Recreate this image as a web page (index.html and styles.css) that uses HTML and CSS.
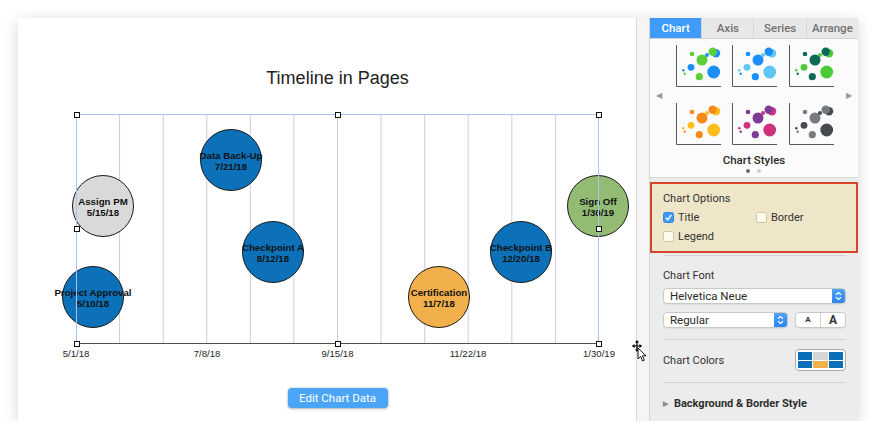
FILE: index.html
```html
<!DOCTYPE html>
<html lang="en">

<head>
    <meta charset="UTF-8">
    <meta name="viewport" content="width=device-width, initial-scale=1.0">
    <title>Timeline in Pages</title>
    <link rel="stylesheet" href="styles.css">
</head>

<body>
    <svg width="0" height="0" class="defs">
        <defs>
            <!-- bubble thumbnail used by every chart style -->
            <symbol id="thumb" viewBox="0 0 45 42">
                <path d="M0.5 0V41.5H45" class="thumb_axis" />
                <circle cx="16" cy="9" r="2.3" class="dot_a" />
                <circle cx="26" cy="15" r="5.5" class="dot_a" />
                <circle cx="31" cy="10" r="2" class="dot_b" />
                <circle cx="40" cy="8.3" r="4.2" class="dot_b" />
                <circle cx="36.7" cy="6.7" r="4.2" class="dot_a" />
                <circle cx="15" cy="22.3" r="3.4" class="dot_b" />
                <circle cx="7.3" cy="25.3" r="1.3" class="dot_b" />
                <circle cx="8.7" cy="28.7" r="1.2" class="dot_a" />
                <circle cx="23.3" cy="31.7" r="3.6" class="dot_a" />
                <circle cx="37.7" cy="27" r="6.4" class="dot_b" />
            </symbol>
        </defs>
    </svg>

    <div class="window">
        <main class="canvas">
            <h1 class="chart_title">Timeline in Pages</h1>
            <svg class="plot" width="618" height="276" viewBox="18 89 618 276">
                <!-- grid -->
                <g class="grid">
                    <line x1="119.6" y1="114" x2="119.6" y2="343" />
                    <line x1="163.2" y1="114" x2="163.2" y2="343" />
                    <line x1="206.8" y1="114" x2="206.8" y2="343" />
                    <line x1="250.3" y1="114" x2="250.3" y2="343" />
                    <line x1="293.9" y1="114" x2="293.9" y2="343" />
                    <line x1="337.5" y1="114" x2="337.5" y2="343" />
                    <line x1="381.1" y1="114" x2="381.1" y2="343" />
                    <line x1="424.7" y1="114" x2="424.7" y2="343" />
                    <line x1="468.2" y1="114" x2="468.2" y2="343" />
                    <line x1="511.8" y1="114" x2="511.8" y2="343" />
                    <line x1="555.4" y1="114" x2="555.4" y2="343" />
                </g>
                <!-- bubbles -->
                <g class="bubble">
                    <circle cx="93" cy="297" r="30.5" class="c_blue" />
                    <text x="93" y="295.5">Project Approval</text>
                    <text x="93" y="306.5">5/10/18</text>
                </g>
                <g class="bubble">
                    <circle cx="103" cy="206" r="30.5" class="c_gray" />
                    <text x="103" y="204.5">Assign PM</text>
                    <text x="103" y="215.5">5/15/18</text>
                </g>
                <g class="bubble">
                    <circle cx="231" cy="160" r="30.5" class="c_blue" />
                    <text x="231" y="158.5">Data Back-Up</text>
                    <text x="231" y="169.5">7/21/18</text>
                </g>
                <g class="bubble">
                    <circle cx="273" cy="252" r="30.5" class="c_blue" />
                    <text x="273" y="250.5">Checkpoint A</text>
                    <text x="273" y="261.5">8/12/18</text>
                </g>
                <g class="bubble">
                    <circle cx="439" cy="297" r="30.5" class="c_orange" />
                    <text x="439" y="295.5">Certification</text>
                    <text x="439" y="306.5">11/7/18</text>
                </g>
                <g class="bubble">
                    <circle cx="521" cy="252" r="30.5" class="c_blue" />
                    <text x="521" y="250.5">Checkpoint B</text>
                    <text x="521" y="261.5">12/20/18</text>
                </g>
                <g class="bubble">
                    <circle cx="598" cy="206" r="30.5" class="c_green" />
                    <text x="598" y="204.5">Sign Off</text>
                    <text x="598" y="215.5">1/30/19</text>
                </g>
                <!-- selection frame + axis -->
                <path d="M76.5 343V114.5H598.5V343" class="frame" />
                <line x1="76" y1="343.5" x2="599" y2="343.5" class="axis" />
                <g class="handle">
                    <rect x="74" y="112" width="5" height="5" />
                    <rect x="335" y="112" width="5" height="5" />
                    <rect x="596" y="112" width="5" height="5" />
                    <rect x="74" y="226" width="5" height="5" />
                    <rect x="596" y="226" width="5" height="5" />
                    <rect x="74" y="341" width="5" height="5" />
                    <rect x="335" y="341" width="5" height="5" />
                    <rect x="596" y="341" width="5" height="5" />
                </g>
                <g class="axis_label">
                    <text x="76" y="357">5/1/18</text>
                    <text x="207" y="357">7/8/18</text>
                    <text x="337.5" y="357">9/15/18</text>
                    <text x="468" y="357">11/22/18</text>
                    <text x="599" y="357">1/30/19</text>
                </g>
            </svg>
            <div class="actions">
                <button class="edit_btn">Edit Chart Data</button>
            </div>
        </main>

        <div class="gutter"></div>

        <aside class="inspector">
            <div class="tabs">
                <span class="tab active">Chart</span>
                <span class="tab">Axis</span>
                <span class="tab">Series</span>
                <span class="tab">Arrange</span>
            </div>

            <section class="styles">
                <div class="carousel">
                    <span class="arrow">&#9664;</span>
                    <div class="thumbs">
                        <svg class="thumb s_green"><use href="#thumb" /></svg>
                        <svg class="thumb s_blue"><use href="#thumb" /></svg>
                        <svg class="thumb s_teal"><use href="#thumb" /></svg>
                        <svg class="thumb s_orange"><use href="#thumb" /></svg>
                        <svg class="thumb s_purple"><use href="#thumb" /></svg>
                        <svg class="thumb s_gray"><use href="#thumb" /></svg>
                    </div>
                    <span class="arrow">&#9654;</span>
                </div>
                <div class="styles_label">Chart Styles</div>
                <div class="pager"><i class="on"></i><i></i></div>
            </section>

            <section class="options">
                <div class="label">Chart Options</div>
                <div class="check_grid">
                    <label class="check"><span class="box checked"><svg width="9" height="9" viewBox="0 0 9 9"><path d="M1.8 4.8L3.7 6.8L7.3 1.8" /></svg></span>Title</label>
                    <label class="check"><span class="box"></span>Border</label>
                    <label class="check"><span class="box"></span>Legend</label>
                </div>
            </section>

            <div class="panel">
                <div class="divider first"></div>
                <div class="label font_label">Chart Font</div>
                <div class="popup wide">
                    <span>Helvetica Neue</span>
                    <span class="stepper"><svg width="7" height="10" viewBox="0 0 7 10"><path d="M1 3.8L3.5 1.5L6 3.8M1 6.2L3.5 8.5L6 6.2" /></svg></span>
                </div>
                <div class="font_row">
                    <div class="popup narrow">
                        <span>Regular</span>
                        <span class="stepper"><svg width="7" height="10" viewBox="0 0 7 10"><path d="M1 3.8L3.5 1.5L6 3.8M1 6.2L3.5 8.5L6 6.2" /></svg></span>
                    </div>
                    <div class="segmented">
                        <span class="small_a">A</span>
                        <span class="big_a">A</span>
                    </div>
                </div>
                <div class="divider"></div>
                <div class="colors_row">
                    <span class="label">Chart Colors</span>
                    <div class="swatch">
                        <i class="sw_blue"></i><i class="sw_gray"></i><i class="sw_blue"></i>
                        <i class="sw_blue"></i><i class="sw_orange"></i><i class="sw_blue"></i>
                    </div>
                </div>
                <div class="divider"></div>
                <div class="disclosure"><span class="tri">&#9654;</span>Background &amp; Border Style</div>
            </div>
        </aside>

        <!-- move cursor -->
        <svg class="cursor" width="18" height="24" viewBox="0 0 18 24">
            <path d="M5 1V11M0.5 6H9.5" stroke="#000" stroke-width="1.2" />
            <path d="M5 0L3 2.5H7Z M5 12L3 9.5H7Z M0 6L2.5 4V8Z M10 6L7.5 4V8Z" fill="#000" />
            <path d="M6 8V19L8.6 16.4L10.6 21L12.4 20.2L10.4 15.8H14Z" fill="#fff" stroke="#000" stroke-width="0.9" />
        </svg>
    </div>
</body>

</html>
```

FILE: styles.css
```css
html,body,h1 {
    margin: 0;
    padding: 0;
}
body {
    background-color: #ffffff;
    font-family: 'Roboto', 'Liberation Sans', sans-serif;
}
.defs {
    position: absolute;
}
.window {
    position: relative;
    display: flex;
    margin: 18px 0 0 18px;
    width: 840px;
    height: 403px;
    background-color: #ffffff;
    box-shadow: 0 3px 14px rgba(0, 0, 0, 0.16);
}

/* canvas */
.canvas {
    width: 618px;
    padding-top: 49px;
    border-right: 1px solid #dadada;
    font-family: 'Liberation Sans', Arial, sans-serif;
}
.chart_title {
    padding: 0 37px 0 58px;
    text-align: center;
    font: normal 400 18px/22px 'Liberation Sans', Arial, sans-serif;
    color: #222222;
}
.plot {
    display: block;
}
.grid line {
    stroke: #cdcdd6;
    stroke-width: 1;
}
.bubble circle {
    stroke: #1a1a1a;
    stroke-width: 1;
}
.bubble text {
    text-anchor: middle;
    font-size: 9.7px;
    font-weight: bold;
    fill: #111111;
}
.c_blue { fill: #0c71b9; }
.c_gray { fill: #d9d9d9; }
.c_orange { fill: #f2b04c; }
.c_green { fill: #93bb73; }
.frame {
    fill: none;
    stroke: #a9c3f3;
    stroke-width: 1;
}
.axis {
    stroke: #4e5058;
    stroke-width: 1;
}
.handle rect {
    fill: #ffffff;
    stroke: #111111;
    stroke-width: 1;
    transform: translate(0.5px, 0.5px);
}
.axis_label text {
    text-anchor: middle;
    font-size: 9.6px;
    fill: #262626;
}
.actions {
    padding: 0 37px 0 58px;
    margin-top: 23px;
    text-align: center;
}
.edit_btn {
    width: 100px;
    height: 20px;
    border: none;
    border-radius: 4px;
    background-color: #4ba5f6;
    color: #ffffff;
    font: normal 400 11.5px 'Roboto', 'Liberation Sans', sans-serif;
    box-shadow: 0 0 0 1px rgba(0, 0, 0, 0.06), 0 1px 3px rgba(0, 0, 0, 0.25);
}

.gutter {
    width: 12px;
    background-color: #f5f5f5;
    border-right: 1px solid #d6d6d6;
}

/* inspector */
.inspector {
    width: 209px;
    background-color: #ececec;
    color: #333333;
    font-size: 11px;
}
.tabs {
    display: flex;
    height: 21px;
    background-color: #e8e8e8;
    border-bottom: 1px solid #d4d4d4;
    box-sizing: border-box;
}
.tab {
    flex: 1;
    text-align: center;
    line-height: 21px;
    font-size: 11.5px;
    font-weight: 500;
    color: #717171;
    border-left: 1px solid #d6d6d6;
}
.tab:first-child {
    border-left: none;
}
.tab.active {
    background-color: #3e9bf8;
    color: #ffffff;
}
.styles {
    height: 139px;
    padding-top: 6px;
    box-sizing: border-box;
    background-color: #fbfbfb;
    border-bottom: 1px solid #d8d8d8;
}
.carousel {
    display: flex;
    align-items: center;
}
.arrow {
    width: 8px;
    font-size: 8px;
    color: #9a9a9a;
    text-align: center;
}
.carousel .arrow:first-child {
    margin-left: 5px;
    margin-right: 13px;
}
.carousel .arrow:last-child {
    margin-left: 11px;
}
.thumbs {
    display: grid;
    grid-template-columns: 45px 45px 45px;
    column-gap: 11.5px;
    row-gap: 16px;
}
.thumb {
    width: 45px;
    height: 42px;
}
.thumb_axis {
    fill: none;
    stroke: #5a5a5a;
    stroke-width: 1;
}
.dot_a { fill: var(--a); }
.dot_b { fill: var(--b); }
.s_green { --a: #5ccf3a; --b: #1d8ff8; }
.s_blue { --a: #1b8ef7; --b: #5cc6f8; }
.s_teal { --a: #0d6a57; --b: #4ccb3a; }
.s_orange { --a: #fb8a1c; --b: #fbbf1d; }
.s_purple { --a: #7e3b94; --b: #d1307c; }
.s_gray { --a: #767b81; --b: #46494e; }
.styles_label {
    margin-top: 9px;
    text-align: center;
    font-size: 11.5px;
    line-height: 13px;
    font-weight: 500;
    color: #2a2a2a;
}
.pager {
    display: flex;
    justify-content: center;
    gap: 7px;
    margin-top: 2px;
}
.pager i {
    width: 4px;
    height: 4px;
    border-radius: 50%;
    background-color: #cccccc;
}
.pager i.on {
    background-color: #6b6b6b;
}
.options {
    margin-top: 4px;
    height: 71px;
    box-sizing: border-box;
    padding: 8px 0 0 11px;
    border: 2px solid #d6452b;
    background-color: #efe5c9;
}
.label {
    font-size: 11px;
    line-height: 13px;
    color: #333333;
}
.check_grid {
    display: grid;
    grid-template-columns: 93px 1fr;
    grid-auto-rows: 19px;
    margin-top: 3px;
}
.check {
    display: flex;
    align-items: center;
    gap: 4px;
    font-size: 11px;
    color: #333333;
}
.box {
    display: flex;
    align-items: center;
    justify-content: center;
    width: 11px;
    height: 11px;
    box-sizing: border-box;
    border: 1px solid #cdc4ab;
    border-radius: 2.5px;
    background-color: #fffaec;
}
.box.checked {
    border-color: #2f86e6;
    background-color: #3d98f5;
}
.box path {
    fill: none;
    stroke: #ffffff;
    stroke-width: 1.4;
}
.panel {
    padding: 0 12px 0 13px;
}
.divider {
    height: 1px;
    margin-top: 11px;
    background-color: #d4d4d4;
}
.divider.first {
    margin-top: 2px;
}
.font_label {
    margin-top: 13px;
}
.popup {
    display: flex;
    align-items: center;
    justify-content: space-between;
    height: 16px;
    box-sizing: border-box;
    border: 1px solid #c9c9c9;
    border-radius: 4px;
    background-color: #ffffff;
    padding-left: 6px;
    font-size: 11.5px;
    color: #2a2a2a;
    box-shadow: 0 1px 1px rgba(0, 0, 0, 0.06);
    overflow: hidden;
}
.popup.wide {
    margin-top: 6px;
}
.stepper {
    display: flex;
    align-items: center;
    justify-content: center;
    width: 13px;
    height: 16px;
    background: linear-gradient(#52a5fb, #2a83f1);
}
.stepper path {
    fill: none;
    stroke: #ffffff;
    stroke-width: 1.2;
}
.font_row {
    display: flex;
    justify-content: space-between;
    margin-top: 8px;
}
.popup.narrow {
    width: 125px;
}
.segmented {
    display: flex;
    width: 51px;
    height: 16px;
    box-sizing: border-box;
    border: 1px solid #c9c9c9;
    border-radius: 4px;
    background-color: #ffffff;
    box-shadow: 0 1px 1px rgba(0, 0, 0, 0.06);
}
.segmented span {
    flex: 1;
    text-align: center;
    font-weight: bold;
    color: #333333;
    line-height: 14px;
}
.small_a {
    font-size: 8px;
    border-right: 1px solid #d6d6d6;
}
.big_a {
    font-size: 12px;
}
.colors_row {
    display: flex;
    align-items: center;
    justify-content: space-between;
    margin-top: 9px;
    height: 22px;
}
.swatch {
    display: grid;
    grid-template-columns: repeat(3, 1fr);
    gap: 1px;
    width: 51px;
    height: 22px;
    box-sizing: border-box;
    padding: 2px;
    border: 1px solid #a9a9a9;
    border-radius: 4px;
    background-color: #ffffff;
}
.sw_blue { background-color: #0a6fb8; }
.sw_gray { background-color: #d6d6d6; }
.sw_orange { background-color: #f1b04b; }
.disclosure {
    margin-top: 14px;
    font-size: 11px;
    line-height: 13px;
    font-weight: bold;
    color: #2f2f2f;
}
.tri {
    display: inline-block;
    width: 11px;
    font-size: 7px;
    color: #8a8a8a;
    vertical-align: 1px;
}
.cursor {
    position: absolute;
    left: 614px;
    top: 322px;
}
```
